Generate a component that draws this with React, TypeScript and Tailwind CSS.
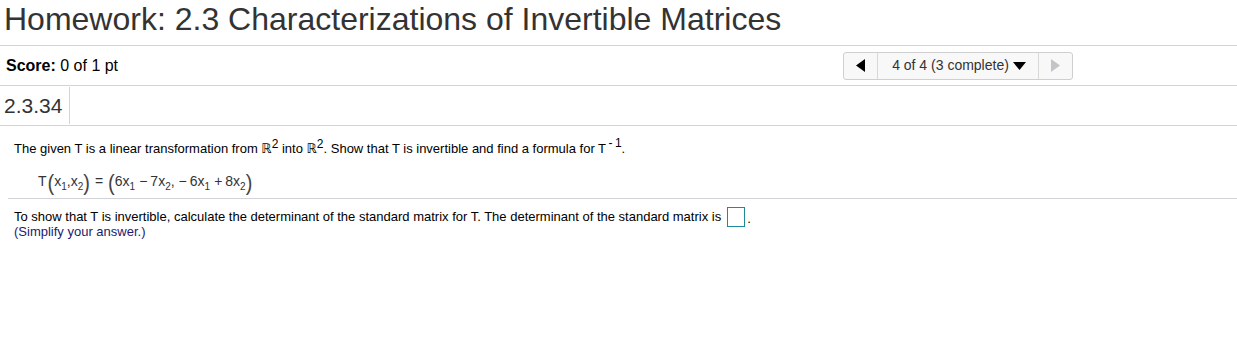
import React from "react";

function Paren({ c }: { c: string }) {
  return (
    <span className="inline-block text-[20px] leading-[20px] font-light scale-y-[1.12] text-[#444]">
      {c}
    </span>
  );
}

function X({ n }: { n: string }) {
  return (
    <span>
      x<span className="text-[10px] relative top-[4px]">{n}</span>
    </span>
  );
}

function Sup({ children }: { children: React.ReactNode }) {
  return <span className="text-[12px] relative -top-[5px]">{children}</span>;
}

export default function App() {
  return (
    <div className="w-[1237px] h-[337px] bg-white font-['Liberation_Sans',Arial,sans-serif]">
      {/* Title */}
      <div className="h-[46px] border-b border-[#d3d3dc]">
        <h1 className="pl-[4px] text-[32px] leading-[38px] text-[#333]">
          Homework: 2.3 Characterizations of Invertible Matrices
        </h1>
      </div>

      {/* Score row */}
      <div className="h-[40px] border-b border-[#d3d3dc] flex items-center">
        <div className="pl-[6px] text-[16px] text-black">
          <span className="font-bold">Score:</span> 0 of 1 pt
        </div>
        <div className="ml-auto mr-[164px] flex h-[28px] border border-[#cfcfcf] rounded-[3px] bg-[#f8f8f8]">
          <div className="w-[34px] flex items-center justify-center border-r border-[#d8d8d8]">
            <svg width="9" height="13" viewBox="0 0 9 13">
              <polygon points="9,0 9,13 0,6.5" fill="#000" />
            </svg>
          </div>
          <div className="w-[161px] pl-[2px] flex items-center justify-center gap-[4px] text-[14px] text-[#333] border-r border-[#d8d8d8]">
            <span>4 of 4 (3 complete)</span>
            <svg width="13" height="8" viewBox="0 0 13 8">
              <polygon points="0,0 13,0 6.5,8" fill="#000" />
            </svg>
          </div>
          <div className="w-[33px] flex items-center justify-center">
            <svg width="9" height="13" viewBox="0 0 9 13">
              <polygon points="0,0 9,6.5 0,13" fill="#c4c4c8" />
            </svg>
          </div>
        </div>
      </div>

      {/* Question number */}
      <div className="h-[40px] border-b border-[#d3d3dc] flex items-stretch">
        <div className="w-[71px] flex items-center pl-[4px] py-[1px] text-[21px] text-[#333]">
          <span className="pr-[7px] h-full flex items-center border-r border-[#d3d3dc]">2.3.34</span>
        </div>
      </div>

      {/* Question body */}
      <div className="pl-[8px]">
        <div className="pl-[6px] pt-[15px] text-[13px] leading-[16px] text-black">
          The given T is a linear transformation from <span className="font-['DejaVu_Sans']">ℝ</span>
          <Sup>2</Sup> into <span className="font-['DejaVu_Sans']">ℝ</span>
          <Sup>2</Sup>. Show that T is invertible and find a formula for T
          <span className="text-[12px] relative -top-[6px]">{"\u2009"}-{"\u2009"}1</span>.
        </div>

        <div className="h-[42px] border-b border-[#d3d3dc] pl-[30px] flex items-center pt-[8px] text-[14px] text-[#333]">
          <span className="mr-[1px]">T</span>
          <Paren c="(" />
          <X n="1" />
          <span>,</span>
          <X n="2" />
          <Paren c=")" />
          <span className="mx-[5px]">=</span>
          <Paren c="(" />
          <span>6</span>
          <X n="1" />
          <span className="ml-[4px] mr-[3px]">−</span>
          <span>7</span>
          <X n="2" />
          <span>,</span>
          <span className="ml-[4px] mr-[3px]">−</span>
          <span>6</span>
          <X n="1" />
          <span className="ml-[4px] mr-[3px]">+</span>
          <span>8</span>
          <X n="2" />
          <Paren c=")" />
        </div>

        <div className="pl-[6px] pt-[8px] text-[13px] text-black">
          <div className="leading-[20px] flex items-center">
            <span>
              To show that T is invertible, calculate the determinant of the standard matrix for T. The
              determinant of the standard matrix is
            </span>
            <span className="inline-block ml-[6px] w-[18px] h-[20px] border border-[#1c8a9b]"></span>
            <span className="ml-[2px] self-end leading-[16px]">.</span>
          </div>
          <div className="leading-[15px] -mt-[3px] text-[#1e1a6e]">(Simplify your answer.)</div>
        </div>
      </div>
    </div>
  );
}
